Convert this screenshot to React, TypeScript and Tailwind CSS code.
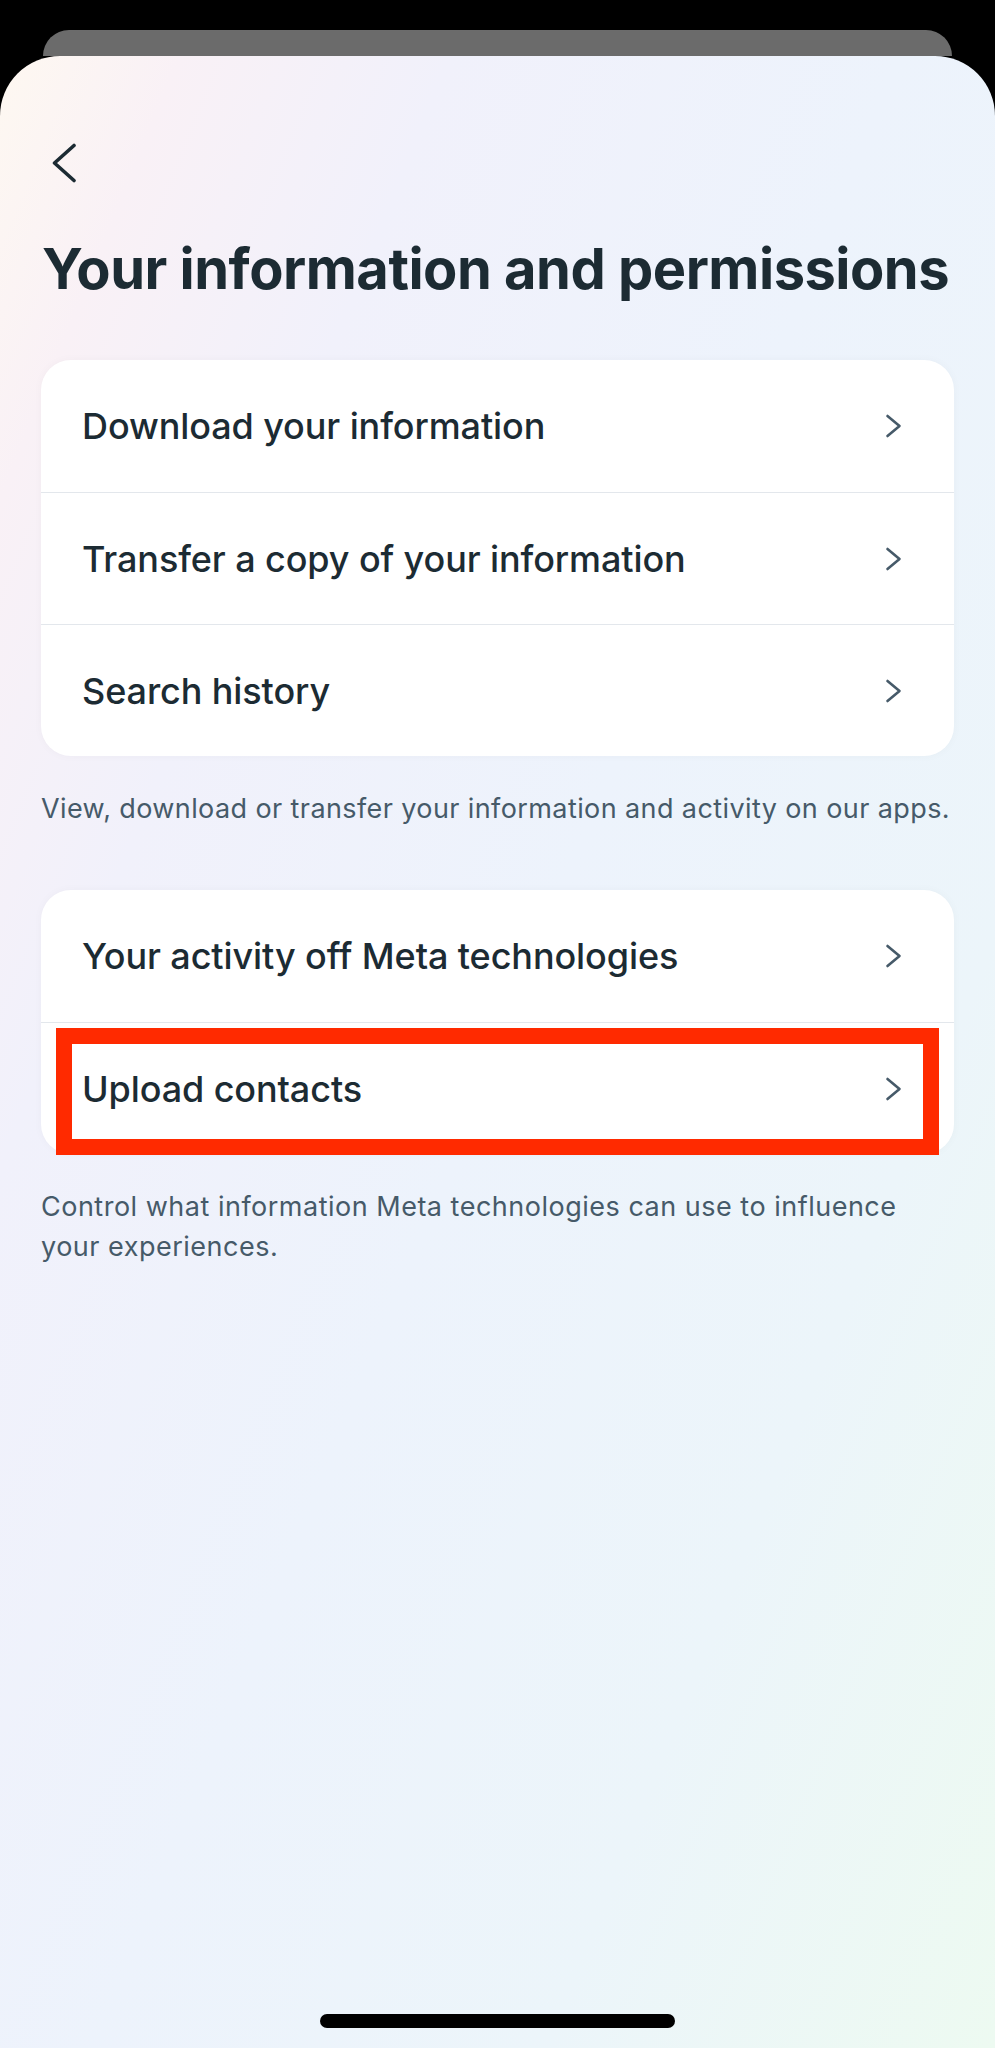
import React from "react";

const font = { fontFamily: "Inter, 'Noto Sans', sans-serif" };

function Chevron() {
  return (
    <svg width="17" height="24" viewBox="0 0 17 24" fill="none" className="shrink-0">
      <path d="M2.5 2 L14.5 12 L2.5 22" stroke="#465a69" strokeWidth="2.6" strokeLinecap="round" strokeLinejoin="round" />
    </svg>
  );
}

function Row({ label, first, highlight }: { label: string; first?: boolean; highlight?: boolean }) {
  return (
    <div
      className={
        "relative flex h-[132px] items-center justify-between pl-[41px] pr-[52px] " +
        (first ? "" : "border-t border-[#e3e7ec]")
      }
    >
      <span className="text-[36px] leading-[42px] font-medium text-[#1c2b33] tracking-[-0.1px]">{label}</span>
      <Chevron />
      {highlight && (
        <div className="pointer-events-none absolute left-[15px] right-[15px] top-[5px] -bottom-[1px] border-[16px] border-[#ff2a00]" />
      )}
    </div>
  );
}

export default function App() {
  return (
    <div className="flex h-[2048px] w-[995px] flex-col overflow-hidden bg-black" style={font}>
      <div className="px-[43px] pt-[30px]">
        <div className="h-[26px] rounded-t-[26px] bg-[#6b6b6b]" />
      </div>
      <div className="flex flex-1 flex-col rounded-t-[60px] bg-[linear-gradient(112deg,#fef8f1_0%,#f9f1f6_10%,#f1f1fb_25%,#edf3fc_50%,#ecf5fa_75%,#edfaf1_100%)]">
        <div className="pl-[51px] pt-[87px]">
          <svg width="26" height="40" viewBox="0 0 26 40" fill="none">
            <path d="M23 2.5 L3.5 20 L23 37.5" stroke="#1c2b33" strokeWidth="3.6" strokeLinecap="round" strokeLinejoin="round" />
          </svg>
        </div>
        <h1 className="mt-[52px] pl-[42px] text-[56px] leading-[68px] font-bold text-[#1c2b33] tracking-[-0.5px] whitespace-nowrap">
          Your information and permissions
        </h1>
        <div className="mx-[41px] mt-[57px] rounded-[30px] bg-white shadow-[0_0_10px_rgba(0,0,0,0.03)]">
          <Row label="Download your information" first />
          <Row label="Transfer a copy of your information" />
          <Row label="Search history" />
        </div>
        <p className="mx-[41px] mt-[33px] whitespace-nowrap text-[27px] leading-[39px] text-[#465a69] tracking-[0.4px]">
          View, download or transfer your information and activity on our apps.
        </p>
        <div className="mx-[41px] mt-[62px] rounded-[30px] bg-white shadow-[0_0_10px_rgba(0,0,0,0.03)]">
          <Row label="Your activity off Meta technologies" first />
          <Row label="Upload contacts" highlight />
        </div>
        <p className="mx-[41px] mt-[33px] pr-[40px] text-[27px] leading-[40px] text-[#465a69] tracking-[0.5px]">
          Control what information Meta technologies can use to influence your experiences.
        </p>
        <div className="mt-auto mb-[20px] flex justify-center">
          <div className="h-[14px] w-[355px] rounded-full bg-black" />
        </div>
      </div>
    </div>
  );
}
